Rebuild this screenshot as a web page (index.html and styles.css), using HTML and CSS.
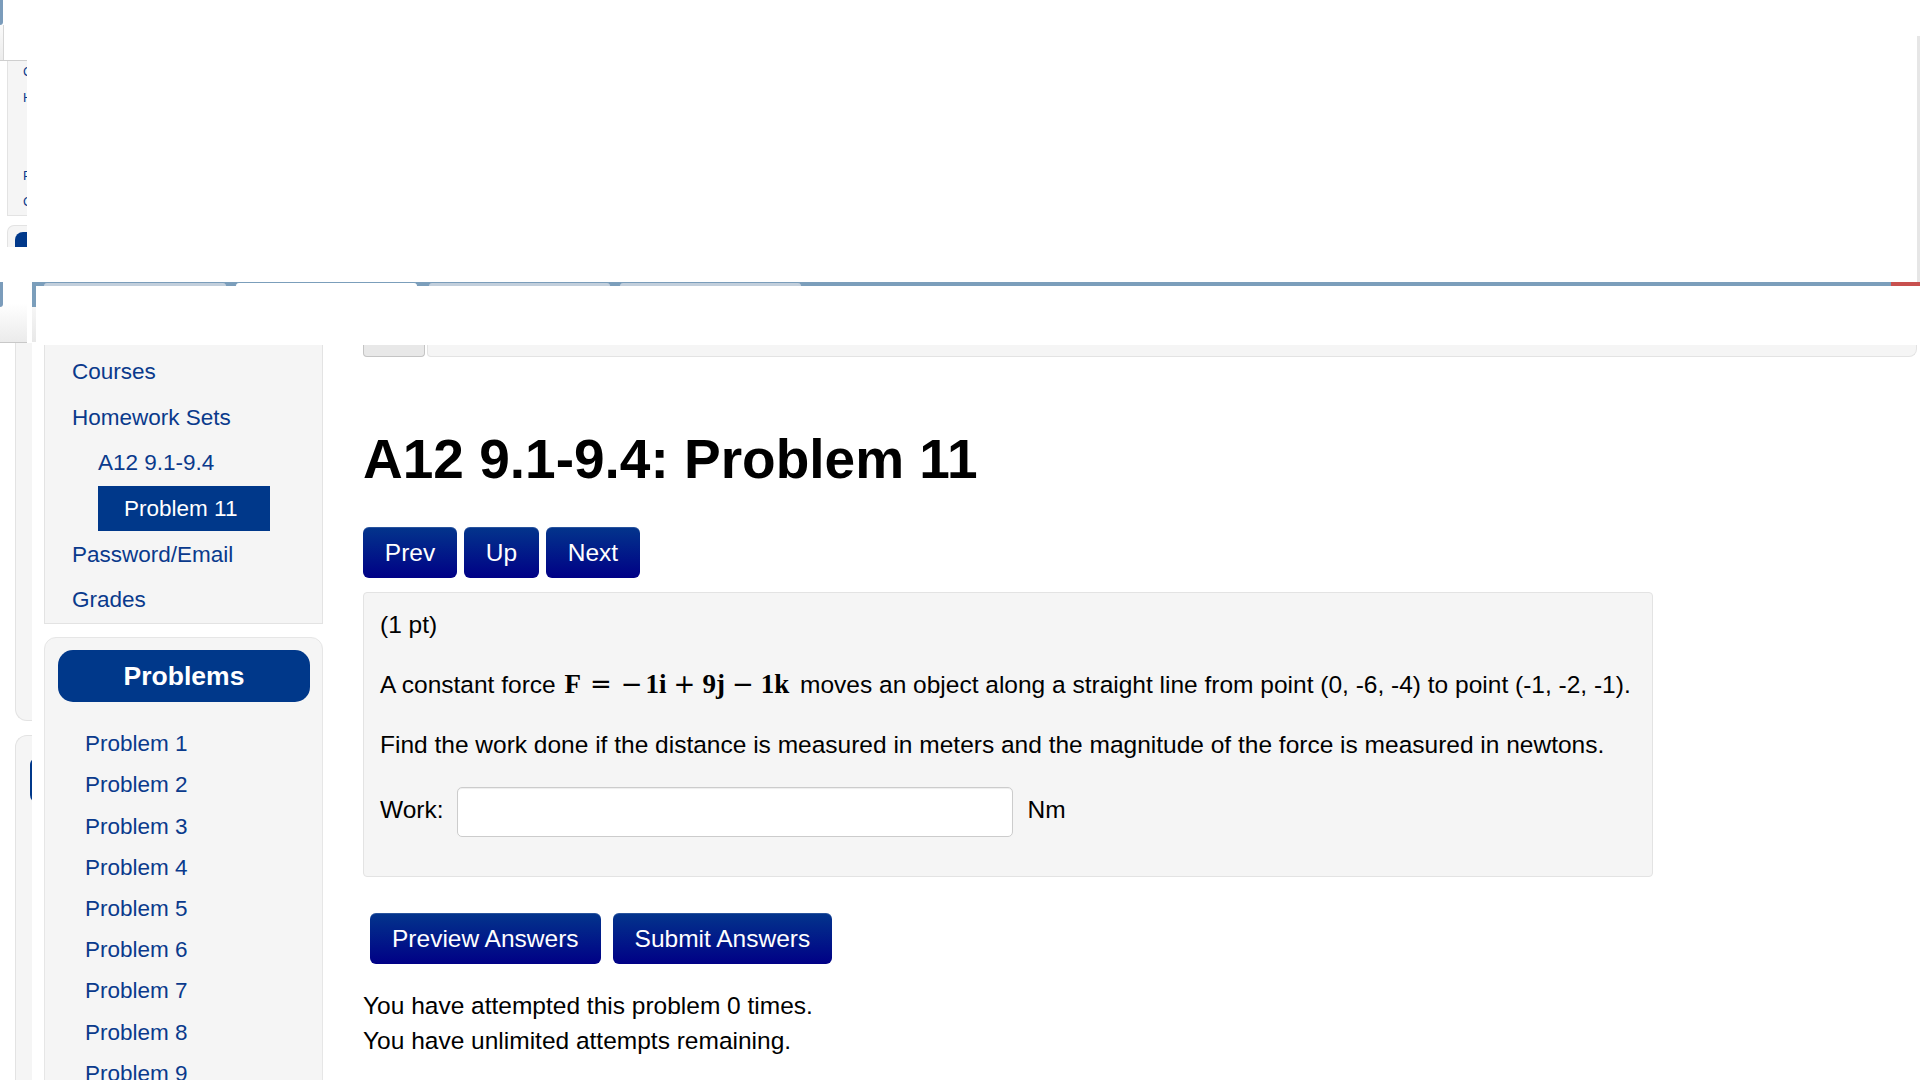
FILE: index.html
```html
<!DOCTYPE html>
<html lang="en">
<head>
    <meta charset="UTF-8">
    <title>A12 9.1-9.4: Problem 11</title>
    <link rel="stylesheet" href="styles.css">
</head>
<body>
    <div class="top-frame"></div>
    <div class="tab-strip">
        <span class="tab first"></span>
        <span class="tab active"></span>
        <span class="tab wide"></span>
        <span class="tab"></span>
        <span class="strip-end"></span>
    </div>
    <div class="frame-gap"></div>

    <div class="page">
        <div class="sidebar">
            <ul class="nav-box">
                <li><a href="#">Courses</a></li>
                <li><a href="#">Homework Sets</a></li>
                <li class="sub"><a href="#">A12 9.1-9.4</a></li>
                <li class="sub active"><a href="#">Problem 11</a></li>
                <li><a href="#">Password/Email</a></li>
                <li><a href="#">Grades</a></li>
            </ul>
            <div class="problems-box">
                <div class="problems-head">Problems</div>
                <ul class="problem-list">
                    <li><a href="#">Problem 1</a></li>
                    <li><a href="#">Problem 2</a></li>
                    <li><a href="#">Problem 3</a></li>
                    <li><a href="#">Problem 4</a></li>
                    <li><a href="#">Problem 5</a></li>
                    <li><a href="#">Problem 6</a></li>
                    <li><a href="#">Problem 7</a></li>
                    <li><a href="#">Problem 8</a></li>
                    <li><a href="#">Problem 9</a></li>
                </ul>
            </div>
        </div>

        <div class="main">
            <div class="crumbs">
                <span class="crumb-tab"></span>
                <span class="crumb-bar"></span>
            </div>
            <h2>A12 9.1-9.4: Problem 11</h2>
            <div class="nav-buttons">
                <a class="btn" href="#">Prev</a>
                <a class="btn" href="#">Up</a>
                <a class="btn" href="#">Next</a>
            </div>
            <div class="problem">
                <p>(1 pt)</p>
                <p>A constant force <span class="math"><b>F</b><span class="op rel">=</span><span class="op neg">&minus;</span><b>1i</b><span class="op bin">+</span><b>9j</b><span class="op bin">&minus;</span><b>1k</b></span> moves an object along a straight line from point (0, -6, -4) to point (-1, -2, -1).</p>
                <p>Find the work done if the distance is measured in meters and the magnitude of the force is measured in newtons.</p>
                <div class="answer-row">
                    <label for="ans">Work:</label>
                    <input id="ans" type="text">
                    <span class="unit">Nm</span>
                </div>
            </div>
            <div class="submit-row">
                <a class="btn" href="#">Preview Answers</a>
                <a class="btn" href="#">Submit Answers</a>
            </div>
            <p class="attempts">You have attempted this problem 0 times.<br>You have unlimited attempts remaining.</p>
        </div>
    </div>

    <!-- leftover bits of the window behind, showing at the left edge -->
    <div class="g-corner g-top"></div>
    <div class="g-top-bar"></div>
    <div class="g-top-line"></div>
    <div class="g-nav">
        <div>Courses</div>
        <div>Homework Sets</div>
        <div>&nbsp;</div>
        <div>&nbsp;</div>
        <div>Password/Email</div>
        <div>Grades</div>
    </div>
    <div class="g-prob"><span class="g-prob-head"></span></div>
    <div class="g-frame"></div>
    <div class="g-corner g-low"></div>
    <div class="frame-edge"></div>
    <div class="g-side one"></div>
    <div class="g-side two"><span class="g-side-head"></span></div>
    <div class="g-right"></div>
</body>
</html>
```

FILE: styles.css
```css
html,
body {
    margin: 0;
    height: 1080px;
    overflow: hidden;
    background: #fff;
    font-family: "Liberation Sans", Arial, sans-serif;
    color: #000;
}

body {
    position: relative;
}

a {
    color: #0a3a8c;
    text-decoration: none;
}

ul {
    list-style: none;
    margin: 0;
    padding: 0;
}

/* top frame and tabs */
.top-frame {
    height: 282px;
}

.tab-strip {
    display: flex;
    height: 4px;
    margin-left: 36px;
    background: #7b9ebb;
}

.tab {
    box-sizing: border-box;
    width: 183px;
    height: 4px;
    margin-left: 8px;
    background: #c2cfdc;
    border: 1px solid #7b9ebb;
    border-bottom: 0;
    border-radius: 4px 4px 0 0;
}

.tab.first {
    width: 184px;
    margin-left: 7px;
}

.tab.wide {
    margin-left: 10px;
}

.tab.active {
    background: #fff;
}

.strip-end {
    width: 29px;
    margin-left: auto;
    background: #c8504e;
}

.frame-gap {
    height: 59px;
}

/* page */
.page {
    display: flex;
    align-items: flex-start;
}

.sidebar {
    width: 279px;
    margin-left: 44px;
    font-size: 22.5px;
}

.nav-box {
    padding-top: 4px;
    background: #f5f5f5;
    border: 1px solid #e3e3e3;
    border-top: 0;
}

.nav-box li {
    padding: 5.3px 0 5.3px 27px;
    line-height: 35px;
}

.nav-box li.sub {
    padding-left: 53px;
}

.nav-box li.active {
    padding-top: 0;
    padding-bottom: 0;
}

.nav-box li.active a {
    display: block;
    width: 146px;
    padding: 5.3px 0 5.3px 26px;
    background: #00388a;
    color: #fff;
}

.problems-box {
    margin-top: 13px;
    padding: 12px 12px 0 13px;
    background: #f5f5f5;
    border: 1px solid #e6e6e6;
    border-radius: 12px;
}

.problems-head {
    height: 52px;
    line-height: 52px;
    border-radius: 15px;
    background: #00388a;
    color: #fff;
    font-size: 26.5px;
    font-weight: bold;
    text-align: center;
}

.problem-list {
    margin-top: 21.6px;
}

.problem-list li {
    padding: 3.1px 0 3.1px 27px;
    line-height: 35px;
}

/* main column */
.main {
    width: 1554px;
    margin-left: 40px;
    font-size: 24.5px;
    line-height: 35px;
}

.crumbs {
    display: flex;
    gap: 2px;
    height: 12px;
}

.crumb-tab {
    width: 60px;
    background: #e8e8e8;
    border: 1px solid #c4c4c4;
    border-top: 0;
    border-radius: 0 0 4px 4px;
}

.crumb-bar {
    flex: 1;
    background: #f5f5f5;
    border: 1px solid #e3e3e3;
    border-top: 0;
    border-radius: 0 0 8px 4px;
}

h2 {
    margin: 67px 0 0;
    font-size: 55px;
    line-height: 70px;
    font-weight: bold;
}

.nav-buttons {
    display: flex;
    gap: 7px;
    margin-top: 33px;
}

.btn {
    display: block;
    height: 51px;
    line-height: 51px;
    padding: 0 21.8px;
    border-radius: 6px;
    background: linear-gradient(#03358c, #000086);
    color: #fff;
    box-shadow: inset 0 1px 0 rgba(255, 255, 255, 0.15);
}

.problem {
    width: 1290px;
    box-sizing: border-box;
    margin-top: 14px;
    padding: 14px 16px 39px;
    background: #f5f5f5;
    border: 1px solid #e3e3e3;
    border-radius: 4px;
}

.problem p {
    margin: 0 0 25px;
}

.math {
    font-family: "Liberation Serif", "Times New Roman", serif;
    font-size: 27px;
    line-height: 1;
    margin: 0 4px 0 2px;
}

.math .op {
    font-family: "DejaVu Sans", sans-serif;
    font-size: 26px;
}

.math .rel {
    margin: 0 9px;
}

.math .neg {
    margin-right: 3px;
}

.math .bin {
    margin: 0 7px;
}

.answer-row {
    display: flex;
    align-items: flex-start;
    height: 50px;
}

.answer-row label,
.answer-row .unit {
    padding-top: 5px;
}

.answer-row input {
    box-sizing: border-box;
    width: 556px;
    height: 50px;
    margin: 0 15px 0 13px;
    background: #fff;
    border: 1px solid #cccccc;
    border-radius: 5px;
    box-shadow: inset 0 1px 1px rgba(0, 0, 0, 0.07);
}

.submit-row {
    display: flex;
    gap: 12px;
    margin: 36px 0 0 7px;
}

.submit-row .btn {
    padding: 0 22px;
}

.attempts {
    margin: 25px 0 0;
    line-height: 34.5px;
}

/* ghost pieces at the edges */
.g-corner {
    position: absolute;
    left: 0;
    width: 3px;
    height: 25px;
    background: #7b9cbb;
    border-radius: 0 0 3px 0;
}

.g-top {
    top: 0;
}

.g-low {
    top: 282px;
}

.g-top-bar {
    position: absolute;
    left: 0;
    top: 25px;
    width: 3px;
    height: 35px;
    background: linear-gradient(#fafafa, #ececec);
    border-right: 1px solid #d6d6d6;
}

.g-top-line {
    position: absolute;
    left: 0;
    top: 60px;
    width: 27px;
    height: 1px;
    background: #cfcfcf;
}

.g-nav {
    position: absolute;
    left: 7px;
    top: 61px;
    width: 20px;
    height: 155px;
    overflow: hidden;
    padding-left: 15px;
    box-sizing: border-box;
    background: #f5f5f5;
    border-left: 1px solid #e3e3e3;
    border-bottom: 1px solid #e3e3e3;
    font-size: 12.8px;
    line-height: 26px;
    color: #0a3a8c;
    white-space: nowrap;
}

.g-nav div:first-child {
    margin-top: -2px;
}

.g-prob {
    position: absolute;
    left: 7px;
    top: 225px;
    width: 20px;
    height: 22px;
    overflow: hidden;
    box-sizing: border-box;
    background: #f5f5f5;
    border-left: 1px solid #e3e3e3;
    border-top: 1px solid #e3e3e3;
    border-radius: 7px 0 0 0;
}

.g-prob-head {
    position: absolute;
    left: 7px;
    top: 6px;
    width: 30px;
    height: 30px;
    background: #00388a;
    border-radius: 8px 0 0 0;
}

.g-frame {
    position: absolute;
    left: 0;
    top: 282px;
    width: 27px;
    height: 60px;
    background: linear-gradient(#fff 35%, #ebebeb);
    border-bottom: 1px solid #c8c8c8;
}

.frame-edge {
    position: absolute;
    left: 32px;
    top: 282px;
    width: 4px;
    height: 60px;
    background: linear-gradient(#7b9ebb 0, #7b9ebb 25px, #f6f6f6 25px, #e8e8e8);
}

.g-side {
    position: absolute;
    left: 15px;
    width: 17px;
    overflow: hidden;
    box-sizing: border-box;
    background: #f5f5f5;
    border-left: 1px solid #e3e3e3;
}

.g-side.one {
    top: 343px;
    height: 378px;
    border-bottom: 1px solid #e3e3e3;
    border-radius: 0 0 0 12px;
}

.g-side.two {
    top: 735px;
    height: 345px;
    border-top: 1px solid #e3e3e3;
    border-radius: 12px 0 0 0;
}

.g-side-head {
    position: absolute;
    left: 14px;
    top: 21px;
    width: 20px;
    height: 46px;
    background: #00388a;
    border-radius: 8px 0 0 8px;
}

.g-right {
    position: absolute;
    left: 1917px;
    top: 36px;
    width: 3px;
    height: 246px;
    background: #e6e6e6;
}
```
